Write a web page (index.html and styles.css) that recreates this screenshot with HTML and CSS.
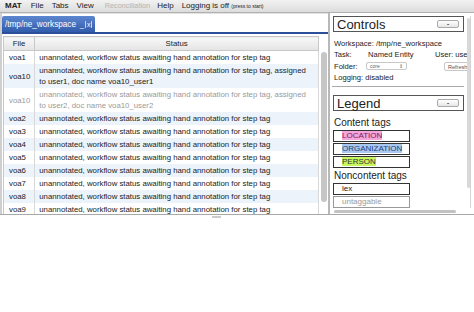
FILE: index.html
```html
<!DOCTYPE html>
<html lang="en">
<head>
  <meta charset="UTF-8" />
  <title>MAT</title>
  <link rel="stylesheet" href="styles.css">
</head>
<body>

  <div class="menubar">
    <span class="menu-item brand">MAT</span>
    <span class="menu-item">File</span>
    <span class="menu-item">Tabs</span>
    <span class="menu-item">View</span>
    <span class="menu-item disabled">Reconciliation</span>
    <span class="menu-item">Help</span>
    <span class="menu-item">Logging is off <small>(press to start)</small></span>
  </div>

  <div class="workarea">
    <div class="left-pane">
      <div class="tab-row">
        <div class="tab">
          /tmp/ne_workspace
          <span class="tab-btns"><span class="tab-btn">_</span><span class="tab-btn">x</span></span>
        </div>
      </div>
      <div class="tab-line"></div>

      <div class="table-frame">
        <table class="doc-table">
          <thead>
            <tr><th class="col-file">File</th><th>Status</th></tr>
          </thead>
          <tbody>
            <tr><td class="col-file">voa1</td><td>unannotated, workflow status awaiting hand annotation for step tag</td></tr>
            <tr class="alt"><td class="col-file">voa10</td><td>unannotated, workflow status awaiting hand annotation for step tag, assigned to user1, doc name voa10_user1</td></tr>
            <tr class="muted"><td class="col-file">voa10</td><td>unannotated, workflow status awaiting hand annotation for step tag, assigned to user2, doc name voa10_user2</td></tr>
            <tr class="alt"><td class="col-file">voa2</td><td>unannotated, workflow status awaiting hand annotation for step tag</td></tr>
            <tr><td class="col-file">voa3</td><td>unannotated, workflow status awaiting hand annotation for step tag</td></tr>
            <tr class="alt"><td class="col-file">voa4</td><td>unannotated, workflow status awaiting hand annotation for step tag</td></tr>
            <tr><td class="col-file">voa5</td><td>unannotated, workflow status awaiting hand annotation for step tag</td></tr>
            <tr class="alt"><td class="col-file">voa6</td><td>unannotated, workflow status awaiting hand annotation for step tag</td></tr>
            <tr><td class="col-file">voa7</td><td>unannotated, workflow status awaiting hand annotation for step tag</td></tr>
            <tr class="alt"><td class="col-file">voa8</td><td>unannotated, workflow status awaiting hand annotation for step tag</td></tr>
            <tr><td class="col-file">voa9</td><td>unannotated, workflow status awaiting hand annotation for step tag</td></tr>
          </tbody>
        </table>
        <div class="vscroll"><div class="thumb"></div></div>
      </div>
    </div>

    <div class="right-pane">
      <div class="right-inner">
        <div class="box-head">
          <span class="box-title">Controls</span>
          <span class="collapse-btn">&#710;</span>
        </div>
        <div class="controls">
          <div class="ctl-line">Workspace: /tmp/ne_workspace</div>
          <div class="ctl-line task-line">
            <span class="lbl">Task:</span><span class="task-name">Named Entity</span><span class="user">User: user1</span>
          </div>
          <div class="ctl-line folder-line">
            <span class="lbl">Folder:</span>
            <span class="select">core <span class="arrows">&#8661;</span></span>
            <span class="refresh">Refresh</span>
          </div>
          <div class="ctl-line">Logging: disabled</div>
        </div>
        <div class="rule"></div>

        <div class="box-head">
          <span class="box-title">Legend</span>
          <span class="collapse-btn">&#710;</span>
        </div>
        <div class="legend">
          <div class="legend-label">Content tags</div>
          <div class="tag-box"><span class="tag tag-location">LOCATION</span></div>
          <div class="tag-box"><span class="tag tag-org">ORGANIZATION</span></div>
          <div class="tag-box"><span class="tag tag-person">PERSON</span></div>
          <div class="legend-label">Noncontent tags</div>
          <div class="tag-box"><span class="tag">lex</span></div>
          <div class="tag-box untaggable"><span class="tag">untaggable</span></div>
        </div>
      </div>
      <div class="hscroll"><div class="hthumb"></div></div>
      <div class="rscroll"><div class="rthumb"></div></div>
    </div>
  </div>

  <div class="bottom-pane">
    <div class="splitter"></div>
  </div>

</body>
</html>
```

FILE: styles.css
```css
* {
  box-sizing: border-box;
  margin: 0;
  padding: 0;
}

html, body {
  width: 474px;
  height: 312px;
  overflow: hidden;
  background: #fff;
  font-family: 'Liberation Sans', Arial, sans-serif;
  color: #222;
}

.menubar {
  height: 13px;
  display: flex;
  align-items: center;
  padding-left: 1px;
  background: linear-gradient(#f2f2f2, #dcdcdc);
  border-bottom: 1px solid #b0b0b0;
  font-size: 8px;
}

.menu-item {
  padding: 0 4px;
  line-height: 12px;
  white-space: nowrap;
}

.menu-item.brand {
  font-weight: bold;
  padding-right: 5px;
}

.menu-item.disabled {
  color: #b4b4b4;
  padding: 0 3px 0 7px;
  font-size: 7.3px;
}

.menu-item small {
  font-size: 5px;
}

.workarea {
  display: flex;
  height: 202px;
  border-bottom: 1px solid #a8a8a8;
}

.left-pane {
  width: 328px;
  display: flex;
  flex-direction: column;
  border-left: 2px solid #cfcfcf;
}

.tab-row {
  height: 19px;
  padding-top: 2px;
  border-top: 1px solid #e2e2e2;
}

.tab {
  width: 93px;
  height: 17px;
  display: flex;
  align-items: center;
  padding-left: 3px;
  background: linear-gradient(#5d86d0, #2f5aa9);
  color: #fff;
  font-size: 8.2px;
  border-radius: 2px 2px 0 0;
}

.tab-btns {
  display: flex;
  margin-left: 3px;
}

.tab-btn {
  font-size: 7px;
  line-height: 7px;
  padding: 0 1px;
  border-right: 1px solid #c8d4ee;
}

.tab-line {
  height: 2px;
  background: #2c4f9c;
}

.table-frame {
  flex: 1;
  display: flex;
  margin: 2px 0 0 1px;
  overflow: hidden;
}

.doc-table {
  width: 317px;
  border-collapse: collapse;
  font-size: 7.8px;
  line-height: 11px;
  align-self: flex-start;
  border-left: 1px solid #c8c8c8;
}

.doc-table th {
  height: 14px;
  font-weight: normal;
  background: linear-gradient(#f8f8f8, #e4e4e4);
  border: 1px solid #c8c8c8;
  text-align: center;
}

.doc-table td {
  padding: 1px 4px;
  vertical-align: middle;
  border-right: 1px solid #d8d8d8;
}

.doc-table td.col-file {
  width: 31px;
  padding-left: 5px;
}

.doc-table tr.alt td {
  background: #edf3fb;
}

.doc-table tr.muted td {
  color: #9a9a9a;
}

.vscroll {
  width: 9px;
  padding: 16px 1px 0 2px;
}

.thumb {
  height: 150px;
  background: #c6c6c6;
  border-radius: 3px;
}

.right-pane {
  width: 146px;
  position: relative;
  border-left: 2px solid #b8b8b8;
  padding: 3px 0 0 3px;
  overflow: hidden;
}

.right-inner {
  width: 131px;
}

.box-head {
  height: 16px;
  display: flex;
  align-items: center;
  justify-content: space-between;
  padding: 0 4px 0 3px;
  border: 1px solid #555;
}

.box-title {
  font-size: 13px;
}

.collapse-btn {
  width: 22px;
  height: 8px;
  border: 1px solid #aaa;
  border-radius: 2px;
  background: linear-gradient(#fff, #e6e6e6);
  font-size: 8px;
  line-height: 11px;
  text-align: center;
}

.controls {
  padding: 6px 0 0 1px;
  font-size: 7.6px;
}

.ctl-line {
  width: 136px;
  height: 11.3px;
  line-height: 11.3px;
  white-space: nowrap;
  display: flex;
  align-items: center;
  overflow: hidden;
}

.ctl-line > span {
  flex-shrink: 0;
}

.task-line .lbl {
  width: 34px;
}

.task-name {
  width: 67px;
}

.folder-line .lbl {
  width: 32px;
}

.select {
  width: 41px;
  height: 8px;
  border: 1px solid #c8c8c8;
  border-radius: 2px;
  font-size: 5px;
  line-height: 7px;
  padding-left: 3px;
  color: #666;
  display: flex;
  justify-content: space-between;
}

.arrows {
  font-size: 5px;
  padding-right: 3px;
}

.refresh {
  margin-left: 37px;
  height: 9px;
  border: 1px solid #c8c8c8;
  border-radius: 2px;
  font-size: 5.5px;
  line-height: 8px;
  padding: 0 3px;
  color: #555;
}

.rule {
  height: 1px;
  background: #aaa;
  margin: 3px 0 8px -1px;
}

.legend {
  padding-top: 6px;
}

.legend-label {
  font-size: 10px;
  line-height: 11px;
  padding-left: 1px;
  margin-bottom: 2px;
}

.tag-box {
  width: 77px;
  height: 12px;
  border: 1px solid #333;
  margin-top: 1px;
  padding-left: 8px;
  font-size: 8px;
  line-height: 10px;
}

.tag-box + .legend-label {
  margin-top: 2px;
}

.tag-location {
  background: #f4a6dc;
  color: #7a1a5a;
}

.tag-org {
  background: #a9c8ef;
  color: #1d3f78;
}

.tag-person {
  background: #c8f560;
  color: #333;
}

.untaggable {
  border-color: #999;
  color: #999;
}

.hscroll {
  position: absolute;
  left: 4px;
  bottom: 1px;
  width: 122px;
  height: 3px;
}

.hthumb {
  height: 3px;
  background: #c2c2c2;
  border-radius: 2px;
}

.rscroll {
  position: absolute;
  right: 3px;
  top: 3px;
  width: 4px;
  height: 192px;
  background: #fff;
  border-right: 1px solid #d4d4d4;
  padding-top: 2px;
}

.rthumb {
  height: 170px;
  width: 3px;
  background: #d8d8d8;
  border-radius: 2px;
}

.bottom-pane {
  height: 97px;
  position: relative;
}

.splitter {
  position: absolute;
  left: 212px;
  top: 1px;
  width: 9px;
  height: 2px;
  border-top: 1px solid #ccc;
  border-bottom: 1px solid #ccc;
}
```
